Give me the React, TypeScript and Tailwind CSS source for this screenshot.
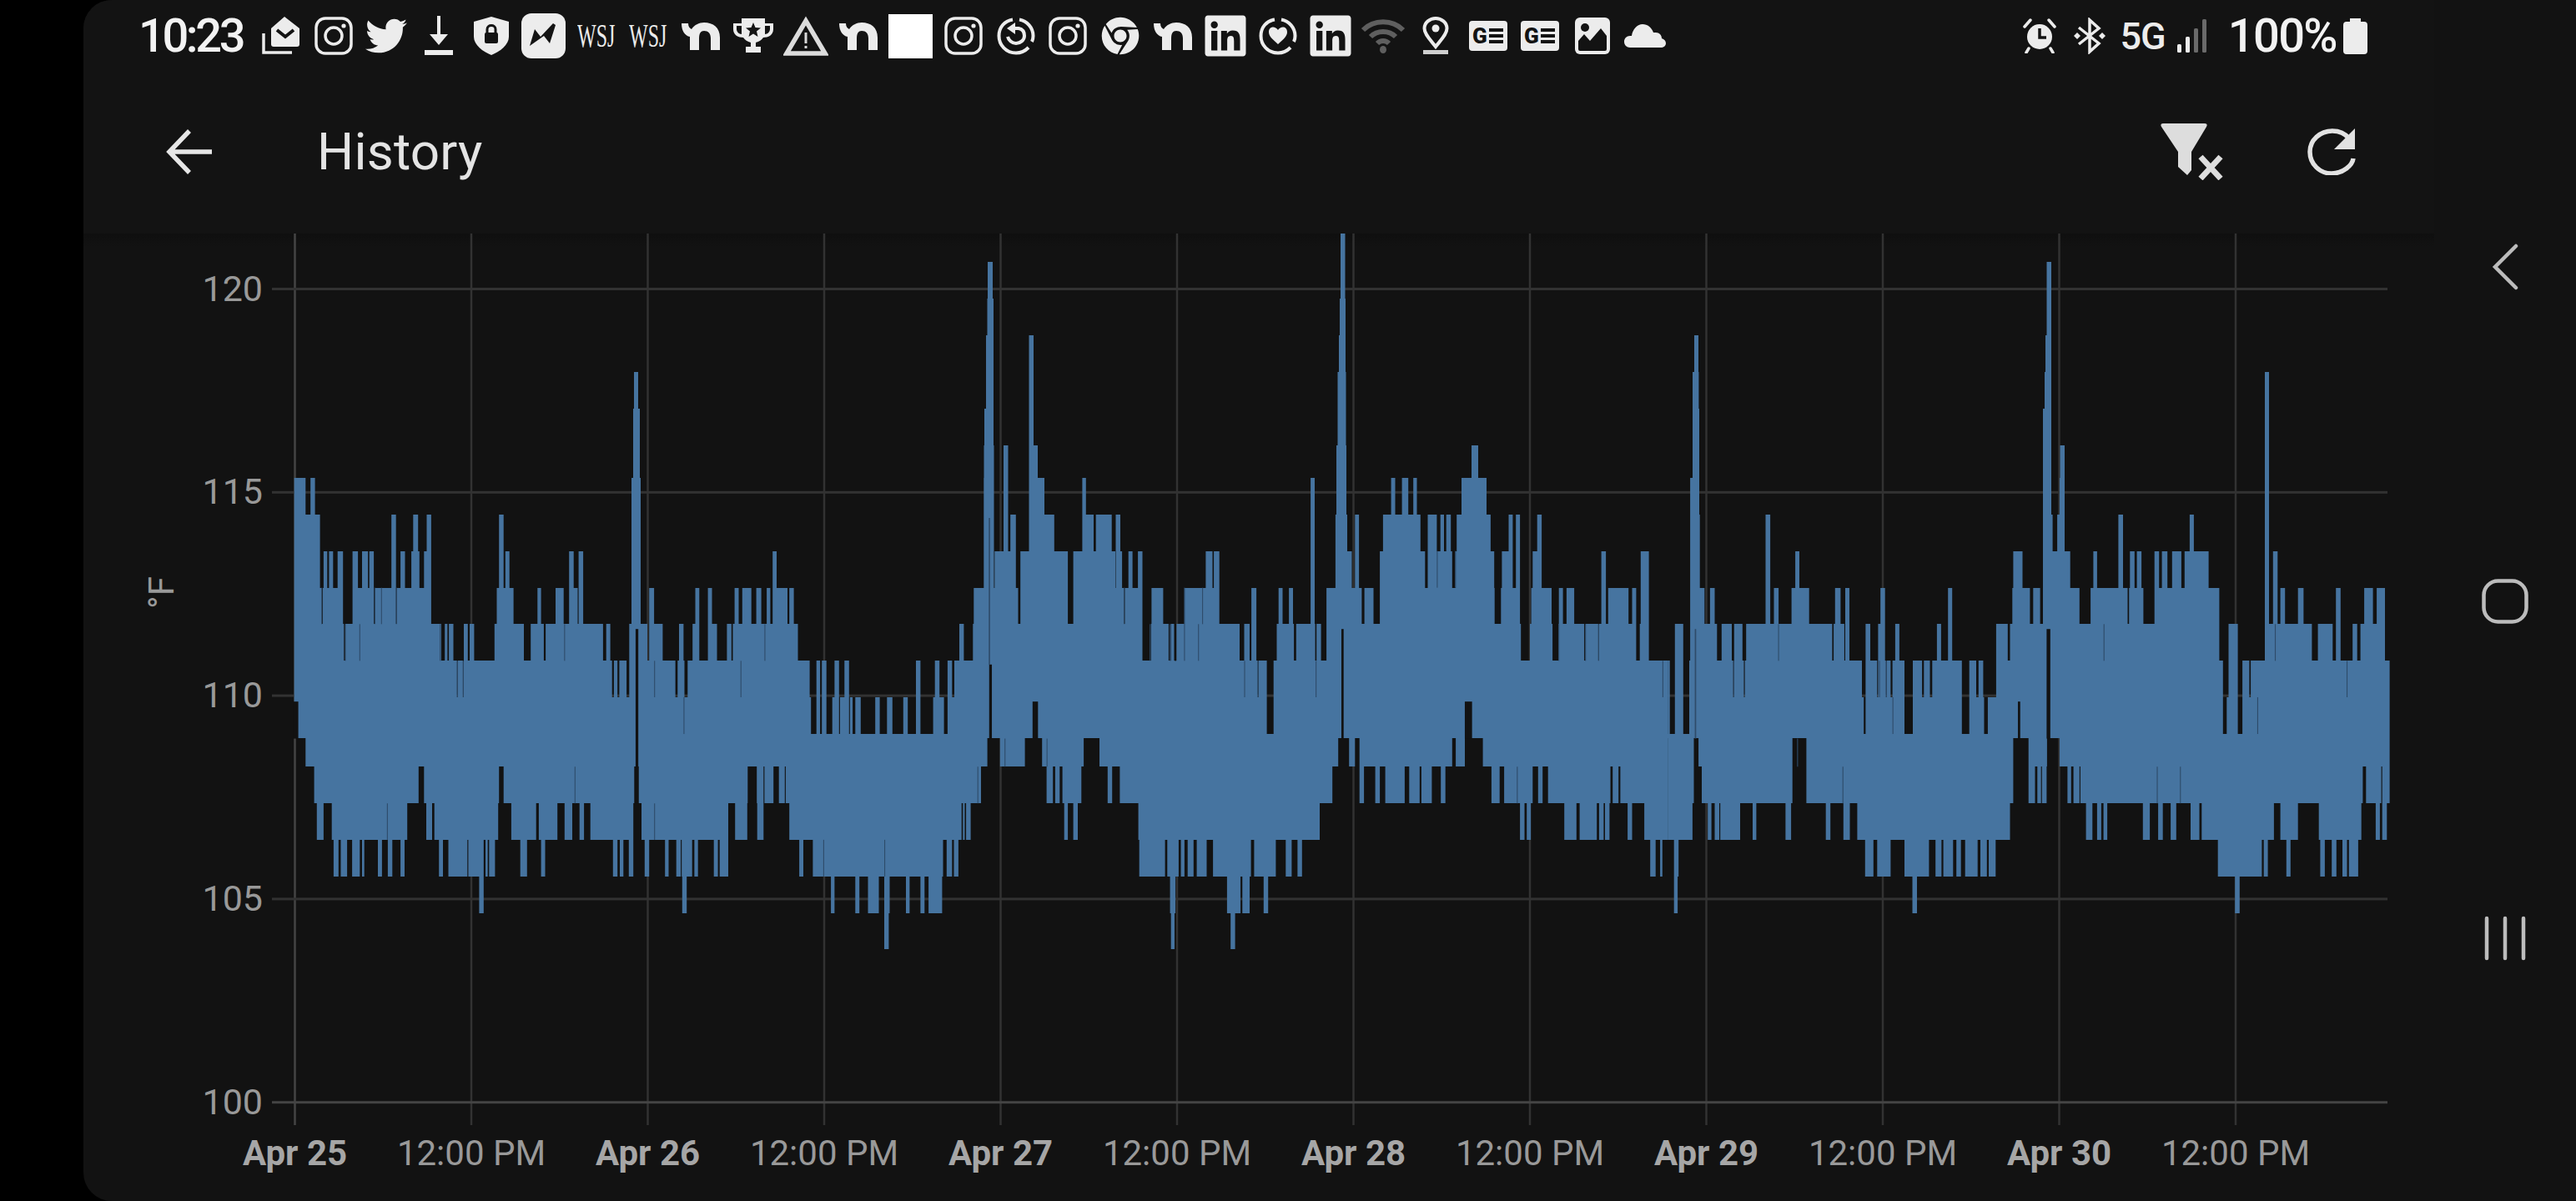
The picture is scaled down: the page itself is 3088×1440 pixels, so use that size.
import React from "react";
import { FaTwitter, FaChrome, FaLinkedin } from "react-icons/fa";

const W = "#ececec";
const BG = "#131313";

const Insta = () => (
  <svg width="46" height="46" viewBox="0 0 46 46">
    <rect x="2" y="2" width="42" height="42" rx="11" fill="none" stroke={W} strokeWidth="3.5" />
    <circle cx="23" cy="23" r="10" fill="none" stroke={W} strokeWidth="3.5" />
    <circle cx="35" cy="11" r="2.6" fill={W} />
  </svg>
);
const Nd = () => (
  <svg width="46" height="33" viewBox="0 0 46 33">
    <path fill={W} d="M0 1H8C8 5 10 7 12 8C15 3 21 0 27 0C38 0 46 6 46 18V33H35V19C35 13 32 10 27 10C23 10 21 13 21 19V33H10V17C4 16 0 10 0 1Z" />
  </svg>
);
const Wsj = () => (
  <span className="inline-block scale-x-[0.6] font-['Liberation_Serif'] text-[40px] leading-none text-[#ececec]">WSJ</span>
);
const Env = () => (
  <svg width="46" height="46" viewBox="0 0 46 46">
    <path fill={W} d="M11 14L27 0L45 14V33Q45 36 42 36H14Q11 36 11 33Z" />
    <path fill="none" stroke={BG} strokeWidth="4" d="M18 16L28 24L38 16" />
    <path fill="none" stroke={W} strokeWidth="3.5" d="M2 20V43H36" />
  </svg>
);
const Download = () => (
  <svg width="36" height="48" viewBox="0 0 36 48">
    <path fill={W} d="M16 0H20V22H29L18 35L7 22H16ZM1 41H35V47H1Z" />
  </svg>
);
const Shield = () => (
  <svg width="44" height="46" viewBox="0 0 44 46">
    <path fill={W} d="M22 0L43 6V24C43 34 32 42 22 46C12 42 1 34 1 24V6Z" />
    <rect x="14" y="19" width="16" height="13" rx="2" fill={BG} />
    <path fill="none" stroke={BG} strokeWidth="3" d="M17 20V15C17 9 27 9 27 15V20" />
  </svg>
);
const Bolt = () => (
  <svg width="53" height="54" viewBox="0 0 53 54">
    <rect x="0" y="0" width="53" height="54" rx="12" fill={W} />
    <path fill={BG} d="M10 39L16 19L23 28L38 12L41 14L34 36L27 27Z" />
  </svg>
);
const Trophy = () => (
  <svg width="48" height="42" viewBox="0 0 48 42">
    <path fill={W} d="M10 0H38V6H48V13C48 20 42 23 36 23C34 26 31 28 27 29V34H33V41H15V34H21V29C17 28 14 26 12 23C6 23 0 20 0 13V6H10ZM4 9V13C4 16 7 19 10 19V9ZM44 9H38V19C41 19 44 16 44 13Z" />
    <path fill={BG} d="M24 5L26.5 11L33 11.5L28 15.5L29.5 22L24 18.5L18.5 22L20 15.5L15 11.5L21.5 11Z" />
  </svg>
);
const Warn = () => (
  <svg width="54" height="48" viewBox="0 0 54 48">
    <path fill="none" stroke="#dcdcdc" strokeWidth="5.5" strokeLinejoin="miter" d="M27 6L50 45H4Z" />
    <path fill="#d8d8d8" d="M25.5 20H28.5V33H25.5ZM25.5 36H28.5V39H25.5Z" />
  </svg>
);
const Ring = ({ heart }: { heart?: boolean }) => (
  <svg width="46" height="46" viewBox="0 0 46 46">
    <path fill="none" stroke={W} strokeWidth="4" d="M19 3.5C9 5 2.5 13 2.5 23C2.5 34 11 43.5 23 43.5C29 43.5 34 41 38 37" />
    <path fill="none" stroke={W} strokeWidth="4" d="M27 3.5C36 5 43.5 13 43.5 23C43.5 26 43 28 42 30" />
    {heart ? (
      <path fill={W} d="M23 33C16 27 12 23 12 18.5C12 11 20 11 23 16C26 11 34 11 34 18.5C34 23 30 27 23 33Z" />
    ) : (
      <>
        <path fill="none" stroke={W} strokeWidth="4" d="M20 14H26C31 15 33 19 33 23C33 28 28 32 23 32C18 32 14 28 13 24" />
        <path fill={W} d="M22 7V21L12 14Z" />
      </>
    )}
  </svg>
);
const Wifi = () => (
  <svg width="54" height="42" viewBox="0 0 54 42">
    <g fill="none" stroke="#5f5f5f" strokeWidth="6">
      <path d="M3 14C16 1 38 1 51 14" />
      <path d="M12 22C20 14 34 14 42 22" />
      <path d="M20 30C24 26 30 26 34 30" />
    </g>
    <ellipse cx="27" cy="37.5" rx="4" ry="4.5" fill="#5f5f5f" />
  </svg>
);
const Pin = () => (
  <svg width="34" height="46" viewBox="0 0 34 46">
    <path fill="none" stroke={W} strokeWidth="4" d="M17 36C10 27 3.5 21 3.5 14C3.5 7 10 2 17 2C24 2 30.5 7 30.5 14C30.5 21 24 27 17 36Z" />
    <circle cx="17" cy="14" r="4.5" fill={W} />
    <rect x="2" y="40" width="30" height="5" fill="#cfcfcf" />
  </svg>
);
const GNews = () => (
  <svg width="46" height="36" viewBox="0 0 46 36">
    <rect width="46" height="36" rx="4" fill={W} />
    <text x="4" y="27" fontFamily="Roboto" fontWeight="900" fontSize="26" fill={BG}>G</text>
    <path fill={BG} d="M24 9H41V13H24ZM24 16H41V20H24ZM24 23H41V27H24Z" />
  </svg>
);
const Pic = () => (
  <svg width="42" height="44" viewBox="0 0 42 44">
    <rect width="42" height="44" rx="6" fill={W} />
    <circle cx="12" cy="12" r="5" fill={BG} />
    <path fill={BG} d="M4 38V28L11 20L18 28L31 13L38 22V38Q38 40 36 40H6Q4 40 4 38Z" />
  </svg>
);
const Cloud = () => (
  <svg width="50" height="28" viewBox="0 0 50 28">
    <path fill={W} d="M7 28C3 28 0 25 0 21C0 17 3 14 7 14C7 14 8 14 9 14C10 6 16 0 22 0C28 0 33 4 35 10C36 10 37 10 38 10C42 10 45 13 45 17C48 18 50 20 50 23C50 26 47 28 44 28Z" />
  </svg>
);

const icons: React.ReactNode[] = [
  <Env />, <Insta />, <FaTwitter size={50} color={W} />, <Download />, <Shield />, <Bolt />, <Wsj />, <Wsj />, <Nd />, <Trophy />, <Warn />, <Nd />,
  <div className="h-[53px] w-[53px] bg-white" />,
  <Insta />, <Ring />, <Insta />, <FaChrome size={46} color={W} />, <Nd />, <FaLinkedin size={56} color={W} />, <Ring heart />, <FaLinkedin size={56} color={W} />, <Wifi />, <Pin />, <GNews />, <GNews />, <Pic />, <Cloud />,
];

/* chart data, per band of the time axis: level -> runs of samples reaching it */
type Iv = [number, number];
type Band = { off: number; s: number; lo: number; hi: number; top: [number, Iv[]][]; bot: [number, Iv[]][]; slits: [number, number, number, number][] };

const bands: Band[] = [
  {
    off: 350, s: 1.845, lo: 350, hi: 1150,
    top: [
      [573, [[5, 30], [41, 51]]],
      [617, [[5, 62], [220, 230], [268, 279], [298, 308], [458, 468]]],
      [661, [[5, 62], [70, 78], [82, 91], [101, 113], [134, 146], [155, 168], [171, 181], [220, 230], [240, 250], [264, 282], [292, 308], [458, 468], [472, 481], [613, 623], [634, 644], [1063, 1072]]],
      [705, [[5, 66], [68, 113], [134, 181], [184, 230], [232, 306], [453, 490], [543, 551], [583, 601], [613, 632], [634, 644], [790, 801], [892, 901], [920, 929], [979, 988], [996, 1016], [1027, 1038], [1050, 1058], [1063, 1096], [1100, 1110], [1507, 1530]]],
      [748, [[5, 115], [118, 330], [338, 344], [347, 357], [380, 389], [393, 403], [448, 513], [528, 557], [561, 688], [695, 704], [746, 786], [790, 820], [856, 866], [886, 901], [920, 940], [962, 972], [975, 1119], [1478, 1486], [1500, 1568]]],
      [792, [[5, 365], [367, 378], [380, 708], [712, 720], [724, 740], [746, 848], [853, 868], [875, 1145], [1160, 1168], [1172, 1182], [1200, 1210], [1222, 1232], [1380, 1390], [1422, 1432], [1450, 1460], [1465, 1568]]],
      [836, [[5, 1148], [1195, 1204], [1212, 1222], [1234, 1240], [1246, 1258], [1290, 1300], [1316, 1328], [1352, 1362], [1380, 1390], [1418, 1442], [1460, 1568]]],
    ],
    bot: [
      [885, [[15, 1568]]],
      [919, [[30, 1536]]],
      [963, [[49, 280], [292, 458], [468, 757], [767, 1008], [1028, 1040], [1045, 1065], [1077, 1090], [1092, 1522]]],
      [1007, [[55, 70], [88, 255], [297, 310], [315, 456], [485, 540], [546, 587], [603, 620], [636, 646], [660, 755], [773, 965], [980, 1007], [1029, 1043], [1100, 1485], [1490, 1502]]],
      [1051, [[92, 103], [108, 122], [133, 150], [155, 160], [190, 199], [212, 222], [240, 249], [325, 334], [346, 388], [390, 420], [428, 433], [436, 449], [505, 520], [551, 560], [710, 720], [725, 733], [745, 755], [780, 790], [825, 833], [850, 860], [862, 885], [890, 898], [933, 942], [946, 965], [1122, 1131], [1152, 1440], [1448, 1460], [1464, 1474]]],
      [1095, [[414, 424], [863, 873], [1192, 1200], [1246, 1255], [1274, 1298], [1310, 1322], [1358, 1366], [1390, 1399], [1408, 1438]]],
      [1138, [[1310, 1320]]],
    ],
    slits: [[65, 67, 391, 509], [117, 119, 509, 628], [149, 151, 509, 628], [182, 184, 391, 509], [197, 199, 391, 509], [230, 232, 391, 509], [327, 329, 509, 628], [365, 367, 628, 746], [378, 380, 628, 746], [625, 627, 971, 1090], [602, 604, 509, 628], [210, 212, 1090, 1208], [760, 766, 525, 1090], [801, 803, 628, 746], [801, 803, 1090, 1208], [866, 868, 746, 865], [992, 994, 628, 746], [1045, 1047, 509, 628], [1175, 1177, 1208, 1327], [1310, 1312, 1208, 1327], [3, 14, 760, 880]],
  },
  {
    off: 1150, s: 1.845, lo: 1150, hi: 2000,
    top: [
      [573, [[54, 76], [100, 108], [154, 187], [272, 280], [777, 786], [838, 855], [955, 964], [979, 993], [1004, 1012], [1112, 1165]]],
      [617, [[54, 76], [100, 108], [113, 125], [154, 210], [272, 297], [302, 337], [346, 356], [777, 786], [832, 858], [875, 884], [937, 1020], [1036, 1056], [1064, 1072], [1077, 1087], [1100, 1175], [1215, 1224], [1231, 1240], [1278, 1288]]],
      [661, [[54, 76], [78, 125], [135, 240], [252, 345], [346, 360], [374, 383], [395, 405], [545, 560], [563, 575], [777, 786], [832, 868], [875, 884], [930, 1030], [1036, 1090], [1098, 1183], [1200, 1224], [1231, 1240], [1268, 1288], [1420, 1430], [1507, 1525]]],
      [705, [[32, 84], [88, 130], [135, 240], [252, 364], [366, 400], [425, 451], [498, 575], [646, 657], [706, 715], [729, 738], [777, 786], [812, 890], [896, 916], [930, 1184], [1198, 1240], [1265, 1310], [1326, 1335], [1343, 1360], [1435, 1480], [1488, 1497], [1507, 1525]]],
      [748, [[0, 10], [30, 405], [424, 463], [468, 475], [480, 620], [630, 642], [646, 657], [702, 740], [745, 787], [790, 800], [812, 1242], [1262, 1312], [1325, 1382], [1385, 1413], [1415, 1497], [1505, 1525]]],
      [792, [[0, 630], [632, 660], [662, 680], [695, 845], [850, 1568]]],
      [836, [[0, 65], [72, 680], [695, 1568]]],
    ],
    bot: [
      [885, [[0, 62], [70, 160], [174, 275], [310, 838], [862, 1118], [1134, 1568]]],
      [919, [[0, 62], [90, 145], [183, 275], [310, 838], [862, 875], [885, 1090], [1098, 1118], [1158, 1568]]],
      [963, [[0, 48], [193, 207], [212, 222], [228, 270], [328, 338], [355, 825], [885, 895], [920, 930], [942, 985], [995, 1018], [1022, 1045], [1065, 1075], [1177, 1195], [1205, 1268], [1280, 1290], [1302, 1440], [1445, 1458], [1462, 1568]]],
      [1007, [[0, 5], [8, 12], [15, 25], [232, 240], [252, 262], [396, 797], [1240, 1250], [1255, 1264], [1338, 1365], [1372, 1410], [1415, 1425], [1428, 1438], [1478, 1488], [1515, 1568]]],
      [1051, [[398, 455], [460, 485], [490, 498], [505, 518], [525, 547], [561, 645], [652, 700], [722, 735], [748, 758], [1528, 1540], [1550, 1555]]],
      [1095, [[466, 478], [592, 622], [626, 642], [673, 683]]],
      [1138, [[468, 476], [600, 610]]],
    ],
    slits: [[65, 68, 165, 640], [66, 72, 640, 880], [364, 366, 391, 509], [421, 423, 509, 628], [465, 468, 509, 628], [476, 480, 509, 628], [497, 499, 391, 628], [537, 539, 391, 509], [528, 530, 509, 628], [630, 632, 628, 746], [660, 662, 628, 746], [788, 790, 628, 746], [845, 850, 525, 880], [162, 174, 760, 880], [1118, 1134, 760, 880], [1056, 1058, 272, 391], [1096, 1098, 272, 391], [1325, 1327, 509, 628], [1384, 1386, 509, 628], [1413, 1415, 509, 628], [1555, 1557, 628, 746], [1233, 1235, 971, 1090], [40, 42, 971, 1090], [100, 102, 880, 971], [193, 195, 880, 971]],
  },
  {
    off: 2000, s: 1.802, lo: 2000, hi: 2865,
    top: [
      [573, [[47, 65], [810, 827], [845, 855], [1289, 1297]]],
      [617, [[47, 68], [210, 220], [810, 830], [840, 855], [972, 982], [1126, 1135], [1289, 1297]]],
      [661, [[47, 68], [210, 220], [274, 283], [745, 765], [810, 868], [918, 926], [972, 982], [997, 1007], [1012, 1022], [1050, 1060], [1066, 1078], [1088, 1108], [1115, 1167], [1289, 1297], [1306, 1316]]],
      [705, [[47, 78], [90, 100], [210, 220], [228, 238], [266, 304], [360, 372], [382, 391], [458, 468], [604, 613], [743, 781], [788, 803], [810, 888], [912, 992], [995, 1026], [1050, 1190], [1289, 1297], [1306, 1316], [1322, 1332], [1360, 1372], [1442, 1452], [1503, 1522], [1530, 1548]]],
      [748, [[14, 32], [47, 105], [115, 137], [142, 160], [168, 354], [357, 380], [382, 391], [426, 436], [453, 468], [490, 499], [580, 589], [604, 613], [708, 733], [738, 1190], [1210, 1230], [1289, 1390], [1403, 1435], [1442, 1452], [1478, 1488], [1495, 1548]]],
      [792, [[0, 3], [14, 32], [45, 140], [143, 163], [165, 350], [353, 418], [426, 451], [455, 470], [472, 480], [484, 510], [528, 548], [552, 565], [570, 634], [650, 665], [670, 680], [708, 820], [823, 1198], [1210, 1230], [1240, 1255], [1258, 1558]]],
      [836, [[0, 3], [14, 32], [45, 422], [426, 510], [528, 634], [650, 1198], [1206, 1230], [1240, 1558]]],
    ],
    bot: [
      [885, [[0, 55], [62, 745], [772, 818], [847, 1558]]],
      [919, [[0, 55], [65, 268], [298, 745], [778, 818], [845, 1558]]],
      [963, [[0, 55], [72, 268], [298, 745], [778, 792], [797, 805], [807, 817], [862, 870], [875, 888], [890, 1500], [1507, 1540], [1545, 1558]]],
      [1007, [[0, 52], [85, 93], [100, 110], [112, 155], [182, 190], [253, 265], [340, 350], [378, 392], [408, 738], [902, 916], [926, 935], [940, 948], [1025, 1040], [1058, 1068], [1085, 1097], [1128, 1147], [1152, 1308], [1322, 1360], [1405, 1497], [1528, 1537], [1542, 1552]]],
      [1051, [[12, 22], [425, 443], [451, 480], [510, 563], [577, 590], [594, 615], [622, 632], [641, 668], [674, 688], [692, 707], [1187, 1282], [1286, 1295], [1335, 1344], [1408, 1418], [1433, 1443], [1456, 1466], [1470, 1490]]],
      [1095, [[12, 20], [527, 537], [1224, 1234]]],
    ],
    slits: [[57, 60, 525, 880], [140, 142, 628, 746], [237, 239, 509, 628], [278, 280, 880, 971], [376, 378, 971, 1090], [484, 486, 746, 865], [455, 457, 628, 746], [470, 472, 628, 746], [940, 942, 509, 628], [682, 690, 746, 865], [755, 760, 760, 880], [817, 825, 525, 880], [1055, 1057, 971, 1090], [1105, 1107, 971, 1090], [1272, 1274, 746, 865], [1465, 1467, 628, 746], [1310, 1312, 509, 628]],
  },
];

const peaks: [number, number, number][] = [
  [760, 765, 446], [759, 767, 490], [757, 768, 573],
  [1184, 1190, 314], [1183.5, 1191, 358], [1182, 1191, 402], [1180, 1191, 490], [1179.5, 1191.5, 534],
  [1203, 1208.5, 534], [1233.5, 1239, 402], [1233.5, 1244, 534], [1233.5, 1252, 573],
  [1607, 1612.5, 280], [1606, 1613, 358], [1605, 1613, 402], [1603.5, 1613.5, 446], [1602, 1614, 534],
  [1764, 1772, 534], [1752, 1782, 573],
  [2031, 2036, 402], [2029, 2036.4, 446], [2029, 2037, 490],
  [2453.5, 2459, 314], [2452, 2459, 402], [2451, 2459, 446], [2449, 2459, 490], [2469.5, 2475, 534],
  [2715, 2720, 446],
];

const chartPath = (() => {
  let d = "M353 880H2864.5V885H353Z";
  const add = (x1: number, x2: number, y1: number, y2: number) => {
    d += `M${x1.toFixed(1)} ${y1}H${x2.toFixed(1)}V${y2}H${x1.toFixed(1)}Z`;
  };
  for (const b of bands) {
    const cv = (zx: number) => Math.max(b.lo, Math.min(b.hi, b.off + zx / b.s));
    for (const [y, list] of b.top) for (const [a, c] of list) if (cv(c) > cv(a)) add(cv(a), cv(c), y, 885);
    for (const [y, list] of b.bot) for (const [a, c] of list) if (cv(c) > cv(a)) add(cv(a), cv(c), 880, y);
  }
  for (const [x1, x2, y] of peaks) add(x1, x2, y, 885);
  return d;
})();

const slitRects = bands.flatMap((b) =>
  b.slits.map(([a, c, y1, y2]) => ({
    x: b.off + a / b.s,
    w: (c - a) / b.s,
    y: 560 + y1 / 2.703,
    h: (y2 - y1) / 2.703,
    wide: c - a >= 4,
  }))
);

const ticks = Array.from({ length: 12 }, (_, i) => 353.5 + 211.5 * i);
const yTicks = [120, 115, 110, 105, 100];
const yOf = (v: number) => 1321.7 - (v - 100) * 48.76;

const Chart = () => (
  <svg viewBox="100 280 2818 1160" className="block h-[1160px] w-[2818px] font-['Roboto']">
    {ticks.map((x, i) => (
      <rect key={x} x={x - 1.25} y={280} width={2.5} height={1069} fill={i === 0 ? "#444444" : "#323232"} />
    ))}
    {yTicks.map((v) => (
      <rect key={v} x={326} y={yOf(v) - 1.5} width={2536} height={3} fill={v === 100 ? "#444444" : "#323232"} />
    ))}
    <path d={chartPath} fill="#4674a0" />
    {slitRects.map((r, i) => (
      <rect key={i} x={r.x} y={r.y} width={r.w} height={r.h} fill={r.wide ? "#121212" : "#2e4b69"} />
    ))}
    {yTicks.map((v) => (
      <text key={v} x={315} y={yOf(v) + 14} textAnchor="end" fontSize={43} fill="#999999">{v}</text>
    ))}
    <text transform="translate(208 730) rotate(-90)" fontSize={42} fill="#999999">°F</text>
    {ticks.map((x, i) => (
      <text key={x} x={x} y={1397} textAnchor="middle" fontSize={42} fontWeight={i % 2 === 0 ? 700 : 400} fill={i % 2 === 0 ? "#a6a6a6" : "#999999"}>
        {i % 2 === 0 ? `Apr ${25 + i / 2}` : "12:00 PM"}
      </text>
    ))}
  </svg>
);

export default function App() {
  return (
    <div className="flex h-[1440px] w-[3088px] overflow-hidden bg-black font-['Roboto',sans-serif]">
      <div className="w-[100px] shrink-0" />
      <div className="flex h-full w-[2988px] overflow-hidden rounded-l-[34px] bg-[#121212]">
        <div className="flex w-[2818px] shrink-0 flex-col">
          <div className="flex h-[280px] flex-col bg-[#131313]">
            <div className="flex h-[86px] items-center pl-[66px]">
              <span className="w-[139.6px] text-[56px] font-medium leading-none tracking-[-3.4px] text-[#f2f2f2]">10:23</span>
              {icons.map((ic, i) => (
                <div key={i} className="flex h-[56px] w-[62.9px] items-center justify-center">{ic}</div>
              ))}
              <div className="ml-auto flex h-[56px] items-center pr-[80px]">
                <svg width="40" height="42" viewBox="0 0 40 42" className="mr-[21px]">
                  <circle cx="20" cy="22" r="15" fill={W} />
                  <path fill="none" stroke={BG} strokeWidth="3.5" d="M20 12V23H28" />
                  <path fill="none" stroke={W} strokeWidth="3.5" strokeLinecap="round" d="M2 10L9 2M38 10L31 2M7 36L4 41M33 36L36 41" />
                </svg>
                <svg width="38" height="44" viewBox="0 0 38 44" className="mr-[17px]">
                  <path fill="none" stroke={W} strokeWidth="3.5" d="M6 12L30 31L19 41V3L30 13L6 32" />
                  <path fill={W} d="M0 22L4 18L8 22L4 26ZM30 22L34 18L38 22L34 26Z" />
                </svg>
                <span className="mr-[14px] text-[45px] font-medium leading-none tracking-[-1px] text-[#ececec]">5G</span>
                <svg width="37" height="40" viewBox="0 0 37 40" className="mr-[24px]">
                  <rect x="0" y="30" width="5" height="10" rx="1.5" fill={W} />
                  <rect x="10" y="21" width="5" height="19" rx="1.5" fill={W} />
                  <rect x="20" y="11" width="5" height="29" rx="1.5" fill="#6a6a6a" />
                  <rect x="30" y="0" width="5" height="40" rx="1.5" fill="#6a6a6a" />
                </svg>
                <span className="text-[56px] font-medium leading-none tracking-[-1.6px] text-[#f2f2f2]">100%</span>
                <svg width="29" height="43" viewBox="0 0 29 43" className="ml-[8px]">
                  <path fill={W} d="M8 0H21V4H25Q29 4 29 8V39Q29 43 25 43H4Q0 43 0 39V8Q0 4 4 4H8Z" />
                </svg>
              </div>
            </div>
            <div className="flex flex-1 items-center pb-[2px] pl-[99px]">
              <svg width="56" height="54" viewBox="0 0 56 54" className="shrink-0">
                <path fill="none" stroke="#e6e6e6" strokeWidth="5.5" d="M55 27H5M28 2L4 27L28 52" />
              </svg>
              <span className="ml-[125px] text-[62px] leading-none tracking-[0.2px] text-[#e4e4e4]">History</span>
              <div className="ml-auto flex items-center pr-[94px]">
                <svg width="76" height="68" viewBox="0 0 76 68">
                  <path fill="#dddddd" d="M3 0H53Q57 0 55 4L37 34V56L32 62L21 52V34L1 4Q-1 0 3 0Z" />
                  <path fill="none" stroke="#dddddd" strokeWidth="7" d="M48 40L72 66M72 40L48 66" />
                </svg>
                <svg width="58" height="56" viewBox="0 0 58 56" className="ml-[100px]">
                  <path fill="none" stroke="#e2e2e2" strokeWidth="5.5" d="M50 12C45 6 38 3 30 3C15 3 3 14 3 28C3 43 15 54 29 54C43 54 54 44 55 36" />
                  <path fill="#e2e2e2" d="M57 0V25H32Z" />
                </svg>
              </div>
            </div>
          </div>
          <div className="relative">
            <div className="absolute inset-x-0 top-0 h-[16px] bg-gradient-to-b from-[#0f0f0f] to-[#121212]" />
            <div className="relative"><Chart /></div>
          </div>
        </div>
        <div className="flex w-[170px] shrink-0 flex-col items-center pt-[292px]">
          <svg width="32" height="56" viewBox="0 0 32 56" className="shrink-0">
            <path fill="none" stroke="#bcbcbc" strokeWidth="4.5" strokeLinecap="round" d="M29 3L4 28L29 53" />
          </svg>
          <svg width="56" height="54" viewBox="0 0 56 54" className="mt-[346px] shrink-0">
            <rect x="2.5" y="2.5" width="51" height="49" rx="17" fill="none" stroke="#bcbcbc" strokeWidth="4.5" />
          </svg>
          <svg width="50" height="54" viewBox="0 0 50 54" className="mt-[350px] shrink-0">
            <path fill="none" stroke="#bcbcbc" strokeWidth="4.5" strokeLinecap="round" d="M3 3V51M25 3V51M47 3V51" />
          </svg>
        </div>
      </div>
    </div>
  );
}
